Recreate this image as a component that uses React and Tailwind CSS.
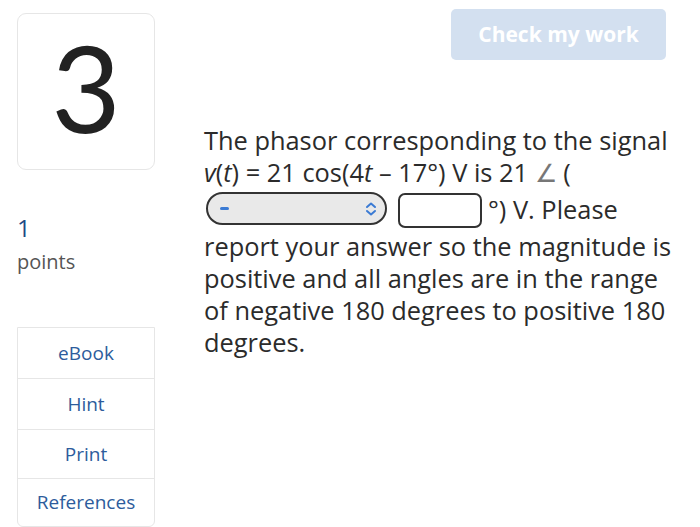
export default function App() {
  return (
    <div className="w-[700px] h-[527px] bg-white overflow-hidden relative" style={{ fontFamily: '"Open Sans", "Liberation Sans", sans-serif' }}>
      <div className="flex">
        {/* left column */}
        <div className="w-[204px] shrink-0 pl-[17px]">
          <div className="mt-[13px] w-[138px] h-[157px] border border-[#e6e6e6] rounded-[9px] flex items-center justify-center">
            <span className="text-[120px] leading-none text-[#222] font-normal -mt-[9px]" style={{ fontFamily: '"Lato", sans-serif' }}>3</span>
          </div>
          <div className="mt-[44px] text-[24px] leading-[28px] text-[#1e4a86]">1</div>
          <div className="mt-[7px] text-[20px] leading-[26px] text-[#555]">points</div>
          <div className="mt-[52px] w-[138px] border border-[#e6e6e6] rounded-b-[6px] text-[#2d5c9c] text-[19px]">
            <div className="h-[51px] flex items-center justify-center border-b border-[#e6e6e6]">eBook</div>
            <div className="h-[51px] flex items-center justify-center border-b border-[#e6e6e6]">Hint</div>
            <div className="h-[49px] flex items-center justify-center border-b border-[#e6e6e6]">Print</div>
            <div className="h-[47px] flex items-center justify-center">References</div>
          </div>
        </div>
        {/* right column */}
        <div className="flex-1">
          <div className="flex justify-end pt-[9px] pr-[34px]">
            <button className="w-[215px] h-[51px] rounded-[5px] bg-[#d3e0f0] text-white text-[21px] font-bold">Check my work</button>
          </div>
          <div className="mt-[64px] text-[25.4px] leading-[32px] text-[#2b2b2b]">
            <div className="whitespace-nowrap">The phasor corresponding to the signal</div>
            <div className="whitespace-nowrap"><i>v</i>(<i>t</i>) = 21 cos(4<i>t</i> – 17°) V is 21 <span className="text-[#777]">∠</span> (</div>
            <div className="flex items-center h-[42px] whitespace-nowrap">
              <div className="w-[181px] h-[33px] rounded-full border-2 border-[#333] bg-[#e9e9e9] flex items-center justify-between pl-[12px] pr-[8px] ml-[2px] -mt-[1px]">
                <div className="w-[9px] h-[2.5px] rounded-full bg-[#3b7bd4]"></div>
                <svg width="12" height="14" viewBox="0 0 12 14" fill="none" stroke="#3b7bd4" strokeWidth="2" strokeLinecap="round" strokeLinejoin="round">
                  <path d="M2 5 L6 1.5 L10 5" />
                  <path d="M2 9 L6 12.5 L10 9" />
                </svg>
              </div>
              <div className="ml-[11px] w-[84px] h-[35px] rounded-[7px] border-2 border-[#333] bg-white mt-[3px]"></div>
              <span className="ml-[6px]">°) V. Please</span>
            </div>
            <div className="whitespace-nowrap">report your answer so the magnitude is</div>
            <div className="whitespace-nowrap">positive and all angles are in the range</div>
            <div className="whitespace-nowrap">of negative 180 degrees to positive 180</div>
            <div>degrees.</div>
          </div>
        </div>
      </div>
    </div>
  );
}
